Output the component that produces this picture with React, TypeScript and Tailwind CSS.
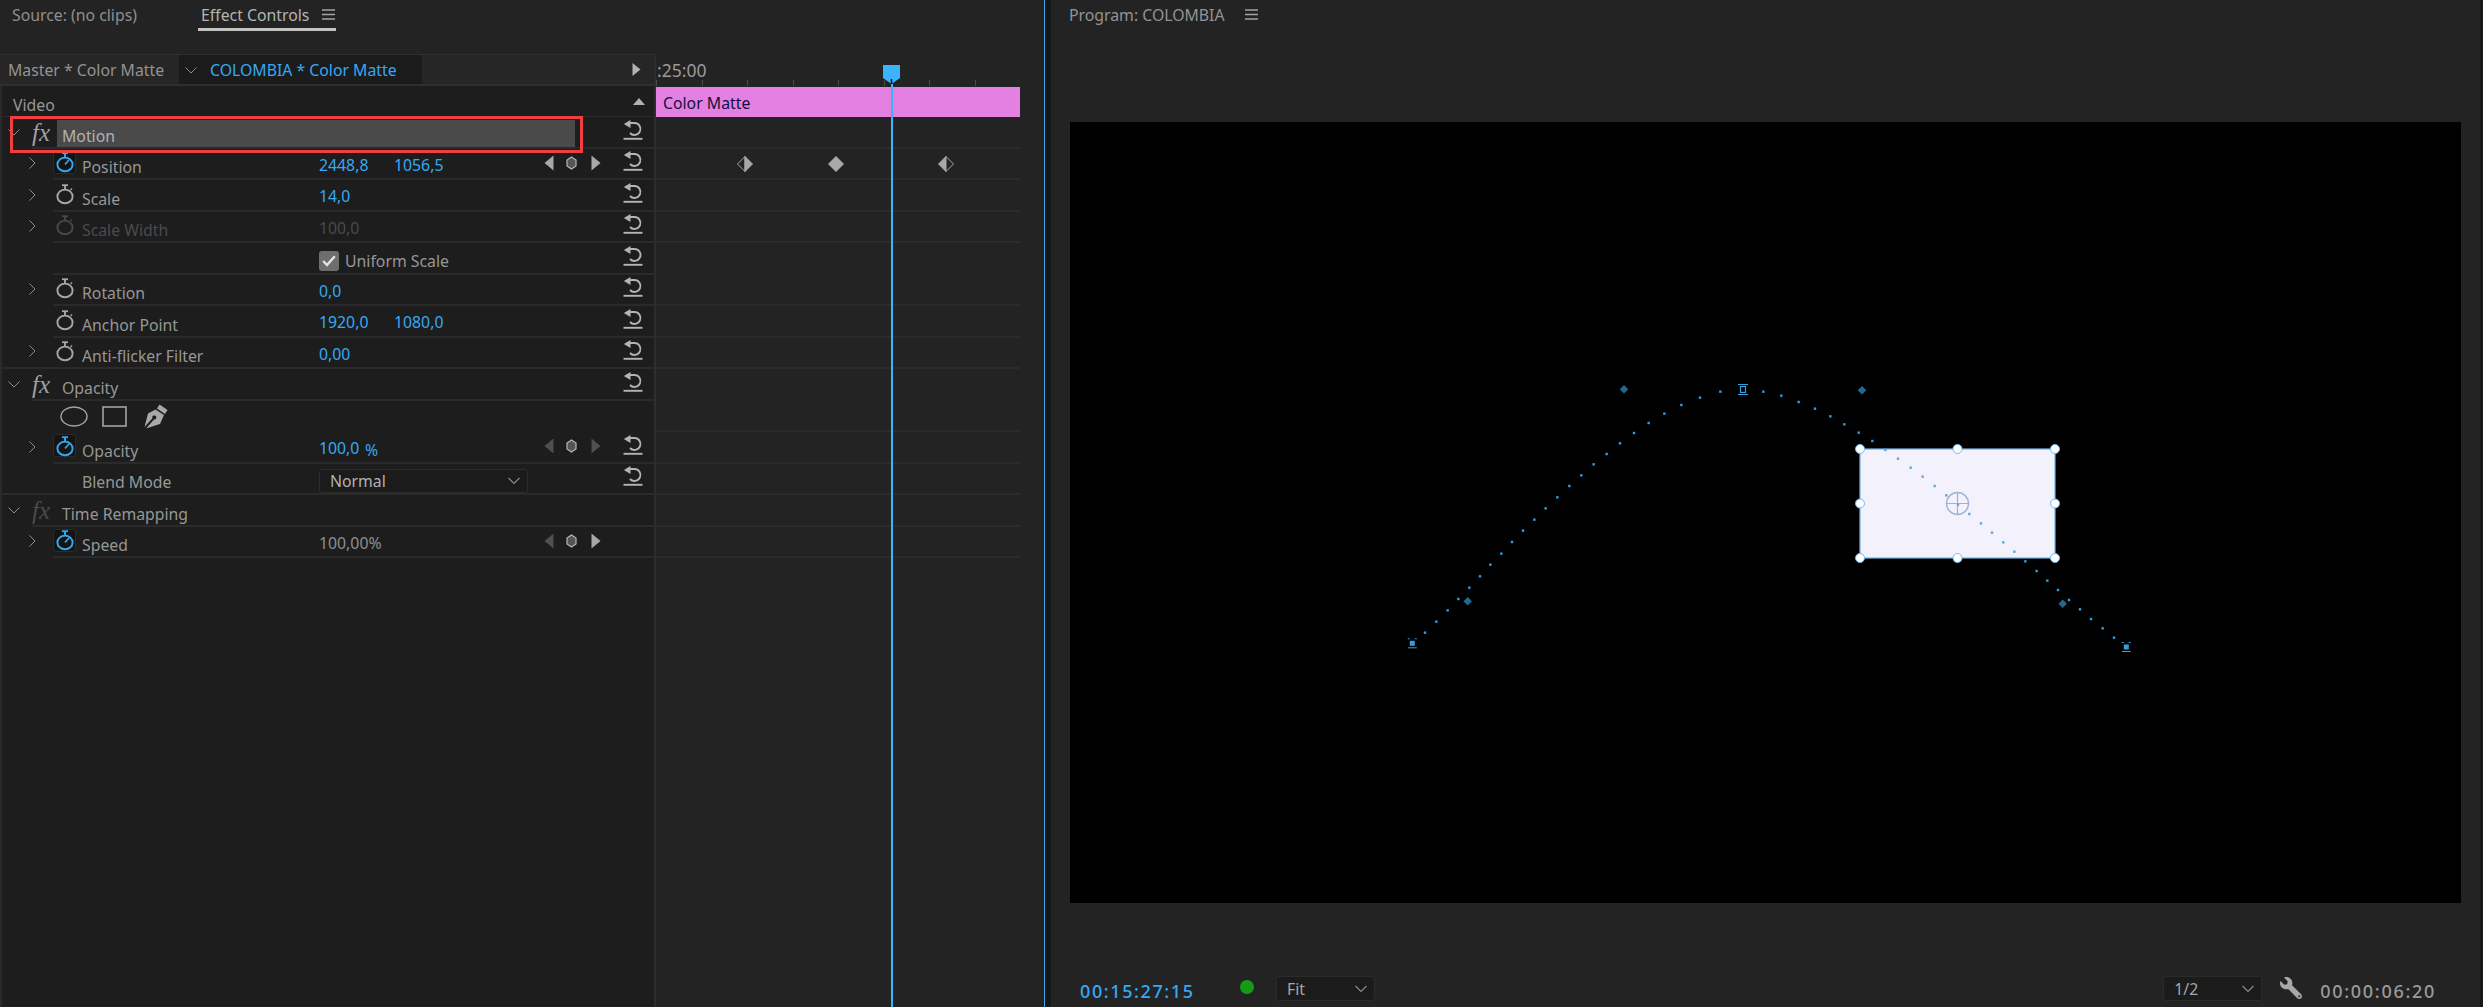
import React from "react";
import { FaWrench } from "react-icons/fa";

const dots: [number, number][] = [
  [135,818],[169,785],[203,751],[235,717],[268,683],[300,649],[331,614],[364,581],[396,546],[429,512],[463,479],[497,445],[532,412],[568,378],[604,346],[641,313],[680,282],[720,250],[762,219],[806,189],[853,161],[904,135],[960,113],[1021,95],[1150,95],[1204,107],[1256,126],[1305,146],[1351,169],
];
const dots2: [number, number][] = [
  [193,13],[236,38],[277,63],[316,90],[354,116],[392,143],[428,170],[464,198],[499,226],[534,254],[568,282],[603,310],[636,338],[670,367],[703,395],[736,424],[770,453],[802,482],[834,510],[867,540],[900,568],[933,597],[968,625],[1002,653],
];
const VX = 1070;
const VY = 122;
const pathDots = [
  ...dots.map(([x, y]) => [x / 3 + 1380 - VX, y / 3 + 360 - VY]),
  ...dots2.map(([x, y]) => [x / 3 + 1780 - VX, y / 3 + 420 - VY]),
];

const timelineLines = [true, true, true, true, false, true, true, true, false, true, true, true, true, true];

function Chevron({ open, className = "" }: { open?: boolean; className?: string }) {
  return (
    <svg width="12" height="14" viewBox="0 0 12 14" className={className} fill="none" stroke="#8c8c8c" strokeWidth="1">
      {open ? <path d="M0.5 4.5 L6 10 L11.5 4.5" /> : <path d="M3.5 1.5 L9 7 L3.5 12.5" />}
    </svg>
  );
}

function Stopwatch({ kind }: { kind: "active" | "idle" | "dim" }) {
  const c = kind === "active" ? "#33a9f2" : kind === "idle" ? "#a6a6a6" : "#484848";
  return (
    <svg width="18" height="22" viewBox="0 0 18 22" fill="none" stroke={c} strokeWidth="1.9">
      <ellipse cx="9" cy="13.4" rx="7.6" ry="6.8" />
      <path d="M9 6 V3" />
      <path d="M6 2.2 H12" strokeWidth="1.8" />
      {kind === "active" && <path d="M9 13.4 L13.2 8.8" strokeWidth="1.6" />}
      {kind !== "active" && <path d="M14.6 7 L16 5.6" strokeWidth="1.4" />}
    </svg>
  );
}

function Reset() {
  return (
    <svg width="20" height="20" viewBox="0 0 20 20" fill="none" stroke="#b4b4b4" strokeWidth="1.9">
      <path d="M7 3 H11.5 A6 6 0 1 1 7 13" />
      <path d="M0.8 4 L7.5 0 V8 Z" fill="#b4b4b4" stroke="none" />
      <path d="M0.5 18.8 H19.5" />
    </svg>
  );
}

function Nav({ left = "#a8a8a8", right = "#a8a8a8" }: { left?: string; right?: string }) {
  return (
    <div className="flex items-center w-[57px] mb-[1px] shrink-0">
      <svg width="10" height="16" viewBox="0 0 10 16"><path d="M9.5 0.5 V15.5 L0.5 8 Z" fill={left} /></svg>
      <svg width="11" height="14" viewBox="0 0 11 14" className="ml-[12px]"><path d="M5.5 1 L10 4 V10 L5.5 13 L1 10 V4 Z" fill="#555555" stroke="#b6b6b6" strokeWidth="1.2" /></svg>
      <svg width="10" height="16" viewBox="0 0 10 16" className="ml-[14px]"><path d="M0.5 0.5 V15.5 L9.5 8 Z" fill={right} /></svg>
    </div>
  );
}

function Value({ children, w = "w-[75px]" }: { children: React.ReactNode; w?: string }) {
  return <span className={`text-[#35a9f5] text-[15.8px] mt-[5px] ${w}`}>{children}</span>;
}

function Row({
  chevron,
  watch,
  label,
  labelClass = "text-[#979797]",
  children,
  nav,
  reset = true,
  full,
}: {
  chevron?: boolean;
  watch?: "active" | "idle" | "dim";
  label?: string;
  labelClass?: string;
  children?: React.ReactNode;
  nav?: React.ReactNode;
  reset?: boolean;
  full?: boolean;
}) {
  return (
    <div className={`flex h-[31.5px] items-stretch ${full ? "border-b-2 border-[#2a2a2a]" : ""}`}>
      <div className="w-[51px] shrink-0 flex items-center pl-[24px]">
        {chevron && <Chevron className="mb-[2px]" />}
      </div>
      <div className={`flex-1 flex items-center min-w-0 ${full ? "" : "border-b-2 border-[#2a2a2a]"}`}>
        <div className="w-[29px] flex items-center shrink-0">
          {watch && (
            <div className={`w-[23px] h-[23px] flex items-center justify-center rounded-[3px] mb-[2px] ${watch === "active" ? "bg-[#141414] border border-[#2b2b2b]" : ""}`}>
              <Stopwatch kind={watch} />
            </div>
          )}
        </div>
        <span className={`w-[237px] shrink-0 whitespace-nowrap mt-[10px] ${labelClass}`}>{label}</span>
        <div className="flex items-center flex-1">{children}</div>
        {nav}
        <div className={`w-[20px] ${nav ? "ml-[22px]" : "ml-[19px]"} mr-[11px] shrink-0 mb-[4px]`}>{reset && <Reset />}</div>
      </div>
    </div>
  );
}

function Effect({
  label,
  fxClass = "text-[#a0a0a0]",
  open = true,
  reset = true,
}: {
  label: string;
  fxClass?: string;
  open?: boolean;
  reset?: boolean;
}) {
  return (
    <div className="flex h-[31.5px] items-stretch">
      <div className="w-[30px] shrink-0 flex items-center pl-[6px]">
        {open && <Chevron open className="mb-[1px]" />}
      </div>
      <div className="flex-1 flex items-center border-b-2 border-[#2a2a2a]">
        <span className="w-[30px] shrink-0 font-['Liberation_Serif',serif] italic text-[25px] leading-none mt-[1px]">
          <span className={fxClass}>fx</span>
        </span>
        <span className="flex-1 text-[#979797] mt-[10px]">{label}</span>
        <div className="w-[20px] mr-[11px] shrink-0 mb-[4px]">{reset && <Reset />}</div>
      </div>
    </div>
  );
}

function Menu({ className = "" }: { className?: string }) {
  return (
    <svg width="13" height="11" viewBox="0 0 13 11" stroke="#a4a4a4" strokeWidth="1.6" className={className}>
      <path d="M0 1 H13 M0 5.5 H13 M0 10 H13" />
    </svg>
  );
}

function Keyframe({ left, right, className = "" }: { left: string; right: string; className?: string }) {
  return (
    <svg width="16" height="16" viewBox="0 0 16 16" className={className}>
      <path d="M8 0.5 L0.5 8 L8 15.5 Z" fill={left} stroke="#a8a8a8" strokeWidth="1" />
      <path d="M8 0.5 L15.5 8 L8 15.5 Z" fill={right} stroke="#a8a8a8" strokeWidth="1" />
    </svg>
  );
}

function MotionPath() {
  return (
    <svg width="1391" height="781" viewBox="0 0 1391 781" className="block">
      {pathDots.map(([x, y], i) => (
        <rect key={i} x={x - 1.2} y={y - 1.2} width="2.4" height="2.4" fill="#2f9fde" />
      ))}
      <rect x="790" y="327" width="195" height="109" fill="#f3f1fc" stroke="#6fb4ea" strokeWidth="1.2" />
      <circle cx="887.5" cy="381.5" r="11" fill="none" stroke="#9db2d6" strokeWidth="1.4" />
      <path d="M887.5 370 V393 M876 381.5 H899" stroke="#9db2d6" strokeWidth="1.2" />
      {pathDots.slice(32, 44).map(([x, y], i) => (
        <rect key={i} x={x - 1.2} y={y - 1.2} width="2.4" height="2.4" fill="#5fa8dc" />
      ))}
      {[
        [790, 327],[887.5, 327],[985, 327],
        [790, 381.5],[985, 381.5],
        [790, 436],[887.5, 436],[985, 436],
      ].map(([x, y], i) => (
        <circle key={i} cx={x} cy={y} r="4.5" fill="#ffffff" stroke="#6dbbf0" strokeWidth="1" />
      ))}
      {[[397.7, 479.3],[554, 267.3],[792, 268.3],[992.7, 481.7]].map(([x, y], i) => (
        <rect key={i} x={x - 3} y={y - 3} width="6" height="6" transform={`rotate(45 ${x} ${y})`} fill="#22688f" />
      ))}
      {[[342.3, 521.3],[1056.3, 525]].map(([x, y], i) => (
        <g key={i}>
          <rect x={x - 2.5} y={y - 2.5} width="5" height="5" fill="#2f9fde" />
          <path d={`M${x - 4.5} ${y - 4.5} H${x - 2.5} M${x + 2.5} ${y - 4.5} H${x + 4.5} M${x - 4.5} ${y + 4.5} H${x + 4.5}`} stroke="#2f9fde" strokeWidth="1" />
        </g>
      ))}
      <g>
        <rect x="670.5" y="264.5" width="5" height="6" fill="none" stroke="#2f9fde" strokeWidth="1.2" />
        <path d="M668 262.5 H678 M668 272.5 H678" stroke="#2f9fde" strokeWidth="1" />
      </g>
    </svg>
  );
}

function Drop({ label, className = "" }: { label: string; className?: string }) {
  return (
    <div className={`h-[25px] w-[99px] shrink-0 rounded-[3px] bg-[#1b1b1b] border border-[#2b2b2b] flex items-center justify-between pl-[10px] pr-[7px] ${className}`}>
      <span className="text-[#a6a6a6] mt-[2px]">{label}</span>
      <svg width="12" height="8" viewBox="0 0 12 8" fill="none" stroke="#8c8c8c" strokeWidth="1.1"><path d="M0.5 1 L6 6.5 L11.5 1" /></svg>
    </div>
  );
}

export default function App() {
  return (
    <div className="w-[2483px] h-[1007px] flex bg-[#232323] overflow-hidden font-['Noto_Sans',sans-serif] text-[15.8px] leading-none">
      <div className="w-[1044px] shrink-0 flex flex-col relative">
        <div className="h-[54px] shrink-0 flex items-start">
          <span className="ml-[12px] mt-[8px] text-[#8f8f8f] w-[186px]">Source: (no clips)</span>
          <div className="w-[138px] h-[31px] border-b-[3px] border-[#c4c4c4] flex items-start justify-between pl-[3px] pr-[1px]">
            <span className="text-[#b4b4b4] mt-[8px]">Effect Controls</span>
            <Menu className="mt-[9px]" />
          </div>
        </div>
        <div className="flex-1 flex min-h-0">
          <div className="w-[656px] shrink-0 bg-[#1d1d1d] border-r-2 border-[#2d2d2d] border-l-2 border-l-[#2a2a2a] flex flex-col">
            <div className="h-[32px] shrink-0 bg-[#262626] border-t border-b-2 border-[#2f2f2f] flex items-stretch -ml-[2px] pl-[2px]">
              <div className="w-[177px] flex items-center pl-[6px] text-[#939393] whitespace-nowrap"><span className="mt-[3px]">Master * Color Matte</span></div>
              <div className="w-[243px] bg-[#1b1b1b] flex items-center">
                <Chevron open className="ml-[6px]" />
                <span className="ml-[13px] mt-[3px] text-[#35a9f5] whitespace-nowrap">COLOMBIA * Color Matte</span>
              </div>
              <div className="flex-1 flex items-center justify-end pr-[13px]">
                <svg width="9" height="13" viewBox="0 0 9 13"><path d="M0.5 0 V13 L8.5 6.5 Z" fill="#b2b2b2" /></svg>
              </div>
            </div>
            <div className="h-[31px] shrink-0 flex items-center justify-between pl-[11px] pr-[9px] border-b border-[#2a2a2a]">
              <span className="text-[#979797] mt-[9px]">Video</span>
              <svg width="12" height="7" viewBox="0 0 12 7" className="mt-[1px]"><path d="M0 7 H12 L6 0 Z" fill="#b2b2b2" /></svg>
            </div>
            <div>
              <div className="relative">
                <Effect label="" />
                <div className="absolute left-[55px] top-[3px] w-[518px] h-[27px] bg-[#4a4a4a] flex items-center pl-[5px]">
                  <span className="text-[#b2b2b2] mt-[7px]">Motion</span>
                </div>
                <div className="absolute left-[8px] -top-[1px] w-[573px] h-[37px] border-[3px] border-[#f03f3f]" />
              </div>
              <Row chevron watch="active" label="Position" nav={<Nav />}>
                <Value>2448,8</Value>
                <Value>1056,5</Value>
              </Row>
              <Row chevron watch="idle" label="Scale"><Value>14,0</Value></Row>
              <Row chevron watch="dim" label="Scale Width" labelClass="text-[#4b4b4b]">
                <span className="text-[#4b4b4b] mt-[5px]">100,0</span>
              </Row>
              <Row>
                <div className="flex items-center mt-[6px]">
                  <div className="w-[20px] h-[20px] rounded-[3px] bg-[#6e6e6e] flex items-center justify-center">
                    <svg width="14" height="12" viewBox="0 0 14 12" fill="none" stroke="#e4e4e4" strokeWidth="2.4"><path d="M1.2 6 L5 10 L12.8 1.2" /></svg>
                  </div>
                  <span className="ml-[6px] mt-[3px] text-[#979797]">Uniform Scale</span>
                </div>
              </Row>
              <Row chevron watch="idle" label="Rotation"><Value>0,0</Value></Row>
              <Row watch="idle" label="Anchor Point">
                <Value>1920,0</Value>
                <Value>1080,0</Value>
              </Row>
              <Row full chevron watch="idle" label="Anti-flicker Filter"><Value>0,00</Value></Row>
              <Effect label="Opacity" />
              <div className="h-[31.5px] flex items-center pl-[58px] gap-[14px]">
                <svg width="28" height="21" viewBox="0 0 28 21" fill="none" stroke="#a4a4a4" strokeWidth="1.4"><ellipse cx="14" cy="10.5" rx="13" ry="9.5" /></svg>
                <svg width="25" height="21" viewBox="0 0 25 21" fill="none" stroke="#a4a4a4" strokeWidth="1.6"><rect x="1" y="1" width="23" height="19" /></svg>
                <svg width="25" height="25" viewBox="0 0 25 25" className="ml-[2px]">
                  <path d="M16.5 0.5 L24.5 6 L22 10 L14 4.5 Z" fill="#a8a8a8" />
                  <path d="M12.5 5.5 L21 11 L17 20 L3 24.5 L11 15.5 A2 2 0 1 0 9.5 14.3 L1.5 23 L5 9.5 Z" fill="#a8a8a8" />
                </svg>
              </div>
              <Row chevron watch="active" label="Opacity" nav={<Nav left="#4f4f4f" right="#4f4f4f" />}>
                <Value w="w-[46px]">100,0</Value>
                <span className="text-[#35a9f5] mt-[9px]">%</span>
              </Row>
              <Row full label="Blend Mode">
                <div className="w-[209px] h-[24px] mt-[5px] rounded-[3px] bg-[#1b1b1b] border border-[#2d2d2d] flex items-center justify-between pl-[10px] pr-[7px]">
                  <span className="text-[#b2b2b2] mt-[2px]">Normal</span>
                  <svg width="12" height="8" viewBox="0 0 12 8" fill="none" stroke="#8c8c8c" strokeWidth="1.1"><path d="M0.5 1 L6 6.5 L11.5 1" /></svg>
                </div>
              </Row>
              <Effect label="Time Remapping" fxClass="text-[#4b4b4b]" reset={false} />
              <Row chevron watch="active" label="Speed" reset={false} nav={<Nav left="#4f4f4f" right="#a8a8a8" />}>
                <span className="text-[#8f8f8f] mt-[5px]">100,00%</span>
              </Row>
            </div>
          </div>
          <div className="w-[364px] shrink-0 flex flex-col">
            <div className="h-[33px] shrink-0 flex flex-col justify-between">
              <span className="text-[#9a9a9a] text-[17.5px] ml-[1px] mt-[8px]">:25:00</span>
              <div className="flex h-[8px] mb-[1px]">
                {[0, 1, 2, 3, 4, 5, 6, 7].map((i) => (
                  <div key={i} className="w-[45.5px] border-l border-[#4a4a4a]" />
                ))}
              </div>
            </div>
            <div className="h-[30px] shrink-0 bg-[#e480e2] flex items-center pl-[7px]">
              <span className="text-[#10103c] mt-[3px]">Color Matte</span>
            </div>
            {timelineLines.map((line, i) => (
              <div key={i} className={`h-[31.5px] shrink-0 flex items-center ${i === 1 ? "pt-[2px]" : ""} ${line ? "border-b-2 border-[#2b2b2b]" : ""}`}>
                {i === 1 && (
                  <>
                    <Keyframe left="#232323" right="#a8a8a8" className="ml-[81px]" />
                    <svg width="16" height="16" viewBox="0 0 16 16" className="ml-[75px]"><path d="M8 0 L16 8 L8 16 L0 8 Z" fill="#a8a8a8" /></svg>
                    <Keyframe left="#a8a8a8" right="#232323" className="ml-[94px]" />
                  </>
                )}
              </div>
            ))}
          </div>
        </div>
        <div className="absolute left-[883px] top-[65px] bottom-0 w-[17px] flex flex-col items-center">
          <svg width="17" height="19" viewBox="0 0 17 19" className="shrink-0">
            <path d="M0 0 H17 V13 L8.5 19 L0 13 Z" fill="#3bb3ff" />
            <path d="M8.5 14 V19" stroke="#111111" strokeWidth="1.5" />
          </svg>
          <div className="flex-1 w-[2px] bg-[#3bb3ff]" />
        </div>
      </div>
      <div className="w-[1px] shrink-0 bg-[#3fa7e8]" />
      <div className="w-[6px] shrink-0 bg-[#181818]" />
      <div className="flex-1 flex flex-col min-w-0">
        <div className="h-[122px] shrink-0 flex items-start pl-[18px]">
          <span className="text-[#939393] w-[176px] mt-[8px] whitespace-nowrap">Program: COLOMBIA</span>
          <Menu className="mt-[9px]" />
        </div>
        <div className="ml-[19px] w-[1391px] h-[781px] bg-black shrink-0">
          <MotionPath />
        </div>
        <div className="flex-1 flex items-center pl-[29px] pt-[71px] pb-[4px] pr-[44px]">
          <span className="w-[160px] shrink-0 text-[#35a9f5] text-[18px] tracking-[1.6px] font-medium mt-[5px]">00:15:27:15</span>
          <div className="w-[14px] h-[14px] rounded-full bg-[#149c14] shrink-0 mb-[3px]" />
          <Drop label="Fit" className="ml-[22px]" />
          <Drop label="1/2" className="ml-auto" />
          <FaWrench className="ml-[18px] w-[22px] h-[22px] text-[#a8a8a8] -scale-x-100 shrink-0 mb-[1px]" />
          <span className="ml-[18px] text-[#9a9a9a] text-[18px] tracking-[1.7px] font-medium mt-[5px] whitespace-nowrap">00:00:06:20</span>
        </div>
      </div>
      <div className="w-[3px] shrink-0 bg-[#181818]" />
    </div>
  );
}
